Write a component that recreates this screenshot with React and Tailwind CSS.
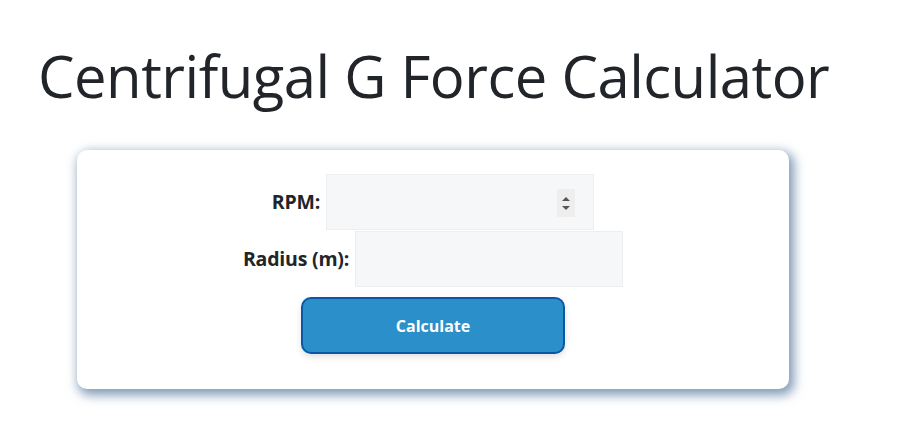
export default function App() {
  return (
    <div className="min-h-[436px] bg-white font-['Open_Sans',sans-serif] text-[#212529]">
      <h1 className="pl-[38px] pt-[40px] text-[58px] font-normal leading-[72px] tracking-[-0.5px]">
        Centrifugal G Force Calculator
      </h1>
      <div className="ml-[77px] mt-[38px] w-[712px] rounded-[10px] bg-white pt-[24px] pb-[35px] shadow-[3px_4px_11px_2px_rgba(60,100,145,0.65)]">
        <div className="flex flex-col items-center">
          <div className="flex items-center gap-[6px]">
            <label className="text-[19.5px] font-bold tracking-[-0.2px] text-[#212529]">RPM:</label>
            <div className="relative h-[56px] w-[268px] border border-[#eceef0] bg-[#f6f7f9]">
              <div className="absolute right-[18px] top-[14px] flex h-[28px] w-[18px] flex-col items-center justify-center gap-[5px] bg-[#eeeeee]">
                <span className="h-0 w-0 border-x-[4px] border-b-[4px] border-x-transparent border-b-[#555]" />
                <span className="h-0 w-0 border-x-[4px] border-t-[4px] border-x-transparent border-t-[#555]" />
              </div>
            </div>
          </div>
          <div className="mt-[1px] flex items-center gap-[6px]">
            <label className="text-[19.5px] font-bold tracking-[-0.2px] text-[#212529]">Radius (m):</label>
            <div className="h-[56px] w-[268px] border border-[#eceef0] bg-[#f6f7f9]" />
          </div>
          <button className="mt-[10px] h-[57px] w-[264px] rounded-[10px] border-2 border-[#0a57a6] bg-[#2b90c9] text-[16px] font-bold text-white shadow-[0_3px_6px_rgba(0,0,0,0.12)]">
            Calculate
          </button>
        </div>
      </div>
    </div>
  );
}
